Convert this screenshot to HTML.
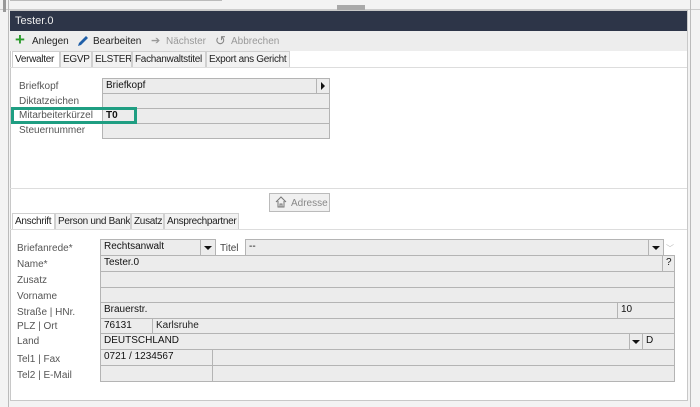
<!DOCTYPE html>
<html><head><meta charset="utf-8"><style>
*{margin:0;padding:0;box-sizing:border-box}
body{width:700px;height:407px;background:#f3f3f3;font-family:"Liberation Sans",sans-serif;font-size:10px;color:#222;position:relative;overflow:hidden;white-space:nowrap}
.a{position:absolute}
.lbl{position:absolute;color:#555;font-size:10px}
.in{position:absolute;background:#ececec;border:1px solid #b4b4b4;font-size:10px;padding:0 3px;line-height:13px;color:#111;overflow:hidden}
.tab{position:absolute;height:16px;border:1px solid #d0d0d0;border-bottom:none;background:#f2f2f2;padding:1px 2px;font-size:10px;line-height:13px;overflow:hidden;letter-spacing:-0.3px}
.tab.act{background:#fff}
.tri{width:0;height:0;border-left:4px solid transparent;border-right:4px solid transparent;border-top:4px solid #111;position:absolute}
</style></head><body>
<div class="a" style="left:0;top:0;width:700px;height:10px;background:#f3f3f3;border-bottom:1px solid #ccc"></div>
<div class="a" style="left:10px;top:0;width:212px;height:1px;background:#bbb"></div>
<div class="a" style="left:337px;top:5px;width:28px;height:6px;background:#a9a9a9"></div>
<div class="a" style="left:3px;top:0;width:3px;height:12px;background:#999"></div>
<div class="a" style="left:8px;top:0;width:1px;height:407px;background:#bbb"></div>
<div class="a" style="left:10px;top:10px;width:678px;height:391px;background:#fff;border:1px solid #c8c8c8"></div>
<div class="a" style="left:690px;top:0;width:1px;height:407px;background:#bbb"></div>
<div class="a" style="left:10px;top:11px;width:677px;height:20px;background:#2d3548;color:#eee;padding:4px 5px;font-size:11px">Tester.0</div>
<div class="a" style="left:10px;top:31px;width:677px;height:20px;background:#ededed"></div>
<div class="a" style="left:15px;top:33px;font-size:17px;color:#2a9a2a;font-weight:bold;line-height:14px">+</div>
<div class="a" style="left:32px;top:36px">Anlegen</div>
<svg class="a" style="left:77px;top:35px" width="12" height="12"><path d="M1 11 L2 8 L9 1 L11 3 L4 10 Z" fill="#1f5fa8"/></svg>
<div class="a" style="left:93px;top:36px">Bearbeiten</div>
<div class="a" style="left:151px;top:34px;color:#999;font-size:11px">➔</div>
<div class="a" style="left:166px;top:36px;color:#999">Nächster</div>
<div class="a" style="left:215px;top:33px;color:#888;font-size:13px">↺</div>
<div class="a" style="left:231px;top:36px;color:#999">Abbrechen</div>
<div class="a" style="left:10px;top:67px;width:677px;height:1px;background:#ddd"></div>
<div class="tab act" style="left:12px;top:51px;width:48px">Verwalter</div>
<div class="tab" style="left:60px;top:51px;width:32px">EGVP</div>
<div class="tab" style="left:92px;top:51px;width:40px">ELSTER</div>
<div class="tab" style="left:132px;top:51px;width:74px">Fachanwaltstitel</div>
<div class="tab" style="left:206px;top:51px;width:84px">Export ans Gericht</div>
<div class="lbl" style="left:19px;top:81px">Briefkopf</div>
<div class="lbl" style="left:19px;top:96px">Diktatzeichen</div>
<div class="lbl" style="left:19px;top:110px">Mitarbeiterkürzel</div>
<div class="lbl" style="left:19px;top:125px">Steuernummer</div>
<div class="in" style="left:102px;top:78px;width:228px;height:16px">Briefkopf</div>
<div class="in" style="left:316px;top:78px;width:14px;height:16px"></div>
<div class="a" style="left:321px;top:82px;width:0;height:0;border-top:4px solid transparent;border-bottom:4px solid transparent;border-left:4px solid #111"></div>
<div class="in" style="left:102px;top:93px;width:228px;height:16px"></div>
<div class="in" style="left:102px;top:108px;width:228px;height:16px;font-weight:bold">T0</div>
<div class="in" style="left:102px;top:123px;width:228px;height:16px"></div>
<div class="a" style="left:11px;top:107px;width:126px;height:17px;border:3px solid #1f9e82"></div>
<div class="a" style="left:10px;top:188px;width:677px;height:1px;background:#ddd"></div>
<div class="a" style="left:269px;top:193px;width:61px;height:19px;border:1px solid #bbb;background:#f0f0f0;color:#888;padding:4px 0 0 21px">Adresse</div>
<svg class="a" style="left:275px;top:196px" width="12" height="12"><path d="M1 6 L6 1 L11 6 M3 5 V11 H9 V5 M5 11 V8 H7 V11" fill="none" stroke="#777"/></svg>
<div class="a" style="left:10px;top:229px;width:677px;height:1px;background:#ddd"></div>
<div class="tab act" style="left:12px;top:213px;width:43px">Anschrift</div>
<div class="tab" style="left:55px;top:213px;width:76px">Person und Bank</div>
<div class="tab" style="left:131px;top:213px;width:33px">Zusatz</div>
<div class="tab" style="left:164px;top:213px;width:75px">Ansprechpartner</div>
<div class="lbl" style="left:17px;top:243px">Briefanrede*</div>
<div class="lbl" style="left:17px;top:259px">Name*</div>
<div class="lbl" style="left:17px;top:275px">Zusatz</div>
<div class="lbl" style="left:17px;top:291px">Vorname</div>
<div class="lbl" style="left:17px;top:307px">Straße | HNr.</div>
<div class="lbl" style="left:17px;top:321px">PLZ | Ort</div>
<div class="lbl" style="left:17px;top:336px">Land</div>
<div class="lbl" style="left:17px;top:354px">Tel1 | Fax</div>
<div class="lbl" style="left:17px;top:370px">Tel2 | E-Mail</div>
<div class="in" style="left:100px;top:239px;width:116px;height:17px">Rechtsanwalt</div>
<div class="in" style="left:200px;top:239px;width:16px;height:17px"></div><div class="tri" style="left:204px;top:246px"></div>
<div class="lbl" style="left:220px;top:243px;color:#444">Titel</div>
<div class="in" style="left:245px;top:239px;width:419px;height:17px">--</div>
<div class="in" style="left:648px;top:239px;width:16px;height:17px"></div><div class="tri" style="left:652px;top:246px"></div>
<div class="a" style="left:666px;top:243px;color:#bbb;font-size:8px">﹀</div>
<div class="in" style="left:100px;top:255px;width:575px;height:17px">Tester.0</div>
<div class="in" style="left:662px;top:255px;width:13px;height:17px;font-size:10px">?</div>
<div class="in" style="left:100px;top:271px;width:575px;height:17px"></div>
<div class="in" style="left:100px;top:287px;width:575px;height:17px"></div>
<div class="in" style="left:100px;top:302px;width:575px;height:17px">Brauerstr.</div>
<div class="in" style="left:617px;top:302px;width:58px;height:17px">10</div>
<div class="in" style="left:100px;top:318px;width:575px;height:17px"></div>
<div class="in" style="left:100px;top:318px;width:53px;height:17px">76131</div>
<div class="a" style="left:156px;top:320px">Karlsruhe</div>
<div class="in" style="left:100px;top:333px;width:575px;height:17px">DEUTSCHLAND</div>
<div class="in" style="left:629px;top:333px;width:14px;height:17px"></div><div class="tri" style="left:632px;top:340px"></div>
<div class="in" style="left:642px;top:333px;width:33px;height:17px">D</div>
<div class="in" style="left:100px;top:349px;width:575px;height:17px"></div>
<div class="in" style="left:100px;top:349px;width:113px;height:17px">0721 / 1234567</div>
<div class="in" style="left:100px;top:365px;width:575px;height:17px"></div>
<div class="in" style="left:100px;top:365px;width:113px;height:17px"></div>
</body></html>
